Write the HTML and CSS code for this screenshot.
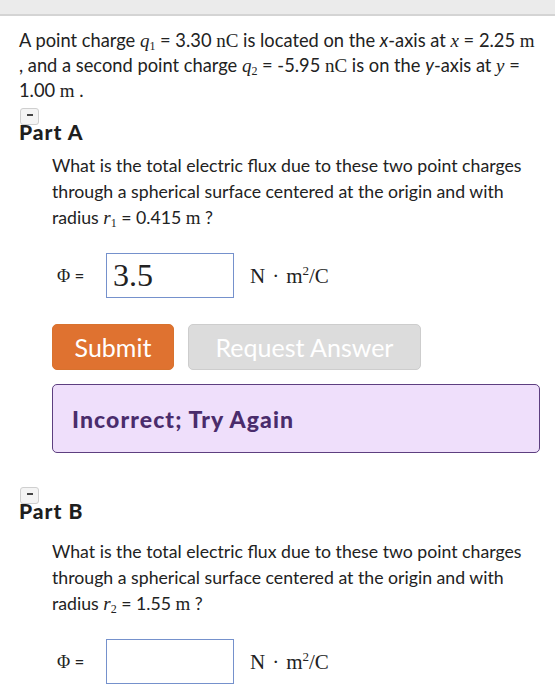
FILE: index.html
```html
<!DOCTYPE html>
<html lang="en">
<head>
<meta charset="utf-8">
<title>Electric flux problem</title>
<link rel="stylesheet" href="styles.css">
</head>
<body>
<div class="topbar"></div>
<main class="content">
  <p class="intro">A point charge <span class="mi">q</span><sub class="msub">1</sub> = 3.30 <span class="mu">nC</span> is located on the <i>x</i>-axis at <span class="mi">x</span> = 2.25 <span class="mu">m</span> , and a second point charge <span class="mi">q</span><sub class="msub">2</sub> = -5.95 <span class="mu">nC</span> is on the <i>y</i>-axis at <span class="mi">y</span> = 1.00 <span class="mu">m</span> .</p>

  <section class="part">
    <div class="part-head"><span class="toggle"></span><h2 class="part-title">Part A</h2></div>
    <div class="part-body">
      <p class="question">What is the total electric flux due to these two point charges through a spherical surface centered at the origin and with radius <span class="mi">r</span><sub class="msub">1</sub> = 0.415 <span class="mu">m</span> ?</p>
      <div class="answer-row">
        <span class="lhs"><span class="phi">Φ</span> =</span>
        <div class="field">3.5</div>
        <span class="units">N<span class="dot">·</span>m<sup>2</sup>/C</span>
      </div>
      <div class="buttons">
        <button class="btn btn-submit">Submit</button>
        <button class="btn btn-request">Request Answer</button>
      </div>
      <div class="feedback">Incorrect; Try Again</div>
    </div>
  </section>

  <section class="part part-b">
    <div class="part-head"><span class="toggle"></span><h2 class="part-title">Part B</h2></div>
    <div class="part-body">
      <p class="question">What is the total electric flux due to these two point charges through a spherical surface centered at the origin and with radius <span class="mi">r</span><sub class="msub">2</sub> = 1.55 <span class="mu">m</span> ?</p>
      <div class="answer-row">
        <span class="lhs"><span class="phi">Φ</span> =</span>
        <div class="field"></div>
        <span class="units">N<span class="dot">·</span>m<sup>2</sup>/C</span>
      </div>
    </div>
  </section>
</main>
</body>
</html>
```

FILE: styles.css
```css
* { box-sizing: border-box; }
html, body { margin: 0; padding: 0; background: #fff; }
body {
  font-family: Lato, "Open Sans", sans-serif;
  color: #222;
}
.topbar {
  height: 16px;
  background: #ebebeb;
  border-bottom: 2px solid #d4d4d4;
}
.content {
  padding: 0 15px 0 19px;
}
.intro {
  margin: 12px 0 0;
  font-size: 18.3px;
  line-height: 25px;
}
.mi {
  font-family: "Liberation Serif", serif;
  font-style: italic;
  font-size: 19px;
}
.mu {
  font-family: "Liberation Serif", serif;
  font-size: 19px;
}
.msub {
  font-family: "Liberation Serif", serif;
  font-size: 12px;
  vertical-align: -3px;
  line-height: 0;
}
.part { margin-top: 5px; }
.part-head {
  position: relative;
  padding-top: 13px;
}
.toggle {
  position: absolute;
  left: 1px;
  top: 0;
  width: 19px;
  height: 17px;
  border: 1px solid #cfcfcf;
  border-radius: 3px;
  background: #f4f4f4;
}
.toggle::after {
  content: "";
  position: absolute;
  left: 6px;
  top: 5px;
  width: 6px;
  height: 2px;
  background: #444;
}
.part-title {
  position: relative;
  margin: 0;
  font-size: 21px;
  font-weight: 900;
  letter-spacing: 1px;
  line-height: 22px;
  color: #1e1e1e;
}
.part-body {
  padding-left: 33px;
}
.question {
  margin: 10px 0 0;
  font-size: 17.7px;
  line-height: 26px;
}
.part-b .question { margin-top: 17px; }
.answer-row {
  display: flex;
  align-items: center;
  margin-top: 22px;
}
.lhs {
  width: 54px;
  padding-left: 5px;
  font-size: 17px;
}
.phi {
  font-family: "Liberation Serif", serif;
  font-size: 18px;
}
.field {
  width: 128px;
  height: 45px;
  border: 1.5px solid #7591cc;
  font-family: "Liberation Serif", serif;
  font-size: 32px;
  line-height: 42px;
  padding-left: 6px;
  color: #222;
}
.units {
  margin-left: 16px;
  font-family: "Liberation Serif", serif;
  font-size: 21px;
}
.dot { margin: 0 7px; }
.units sup { font-size: 13px; }
.buttons {
  display: flex;
  gap: 14px;
  margin-top: 26px;
}
.btn {
  height: 46px;
  border-radius: 5px;
  font-family: Lato, "Open Sans", sans-serif;
  font-size: 25px;
  color: #fff;
  padding: 0;
}
.btn-submit {
  width: 122px;
  background: #df7230;
  border: 1px solid #d8722e;
}
.btn-request {
  width: 233px;
  background: #dcdcdc;
  border: 1px solid #cdcdcd;
}
.feedback {
  margin-top: 14px;
  width: 488px;
  height: 69px;
  padding: 0 19px;
  display: flex;
  align-items: center;
  background: #efdffb;
  border: 1.5px solid #5d3f80;
  border-radius: 5px;
  color: #4a2c6c;
  font-size: 23px;
  font-weight: 900;
  letter-spacing: 1.1px;
}
.part-b { margin-top: 34px; }
```
